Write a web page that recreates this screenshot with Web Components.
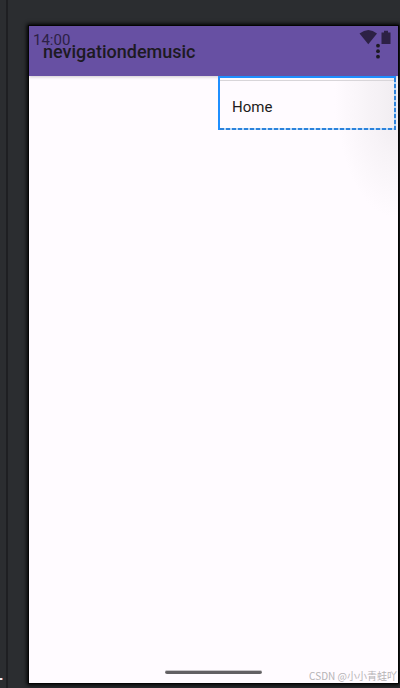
<!DOCTYPE html>
<html lang="en">
<head>
<meta charset="utf-8">
<meta name="viewport" content="width=device-width, initial-scale=1">
<title>nevigationdemusic</title>
<style>
html, body { margin: 0; height: 100%; }
body { font-family: Roboto, "Noto Sans CJK SC", sans-serif; background: #2b2d30; }
</style>
</head>
<body>
<design-surface>
  <phone-screen>
    <status-bar slot="status" time="14:00"></status-bar>
    <app-bar slot="bar">nevigationdemusic</app-bar>
    <overflow-menu><menu-entry>Home</menu-entry></overflow-menu>
    <nav-handle slot="foot"></nav-handle>
  </phone-screen>
  <water-mark slot="mark">CSDN @小小青蛙吖</water-mark>
</design-surface>
<script>
const define = (name, html, setup) => customElements.define(name, class extends HTMLElement {
  constructor() {
    super();
    const t = document.createElement('template');
    t.innerHTML = html;
    this.attachShadow({ mode: 'open' }).append(t.content.cloneNode(true));
    if (setup) setup(this);
  }
});

define('design-surface', `
<style>
:host { display: flex; position: relative; min-height: 100vh; box-sizing: border-box; background: #2b2d30; overflow: hidden; }
.rail { width: 6px; border-right: 2px solid #1e1f22; flex: none; display: flex; align-items: flex-end; }
.tick { width: 3px; height: 2px; margin-bottom: 8px; background: linear-gradient(90deg, #e8e8e8 0 2px, #b8695c 2px); }
.stage { flex: 1; display: flex; padding: 26px 2px 5px 21px; }
::slotted(phone-screen) { flex: 1; }
</style>
<div class="rail"><div class="tick"></div></div>
<div class="stage"><slot></slot></div>
<slot name="mark"></slot>`);

define('phone-screen', `
<style>
:host { display: flex; flex-direction: column; position: relative; background: #fffbff; box-shadow: 0 0 0 1px #050505, 0 0 4px 2px #000; }
main { flex: 1; display: flex; justify-content: flex-end; align-items: flex-start; padding-right: 2px;
  background: radial-gradient(ellipse 60px 110px at 100% 32px, #efebef, #f7f3f7 45%, #fffbff); }
</style>
<slot name="status"></slot><slot name="bar"></slot><main><slot></slot></main><slot name="foot"></slot>`);

define('status-bar', `
<style>
:host { display: flex; position: absolute; inset: 0 0 auto 0; z-index: 3; align-items: flex-start; justify-content: space-between; box-sizing: border-box; padding: 4px 7px 0 4px; color: #2d2145; font-size: 15px; line-height: 21px; }
svg { display: block; }
</style>
<time></time>
<svg width="32" height="16" viewBox="0 0 32 16" fill="currentColor" aria-hidden="true">
<path d="M.5 3.500Q9.500-3.500 18 3.500L9.300 14.200Z"/>
<path d="M22.500 2.500H25V.700h4v1.800h2.500V14h-9Z"/>
</svg>`, el => {
  el.shadowRoot.querySelector('time').textContent = el.getAttribute('time');
});

define('app-bar', `
<style>
:host { display: flex; position: relative; z-index: 1; height: 50px; align-items: center; justify-content: space-between; box-sizing: border-box; padding: 2px 12px 0 14px; background: #6750a3; color: #1d1a22; box-shadow: 0 1px 3px #0003; }
h1 { margin: 0; font-size: 18px; line-height: 24px; font-weight: 500; }
button { border: 0; padding: 0; background: none; color: inherit; display: block; }
svg { display: block; }
</style>
<h1><slot></slot></h1>
<button type="button" aria-label="More options"><svg width="16" height="18" viewBox="0 0 16 18" fill="currentColor"><circle cx="8" cy="2.700" r="1.900"/><circle cx="8" cy="8.200" r="1.900"/><circle cx="8" cy="13.700" r="1.900"/></svg></button>`);

define('overflow-menu', `
<style>
:host { display: block; position: relative; z-index: 2; width: 48.5%; box-sizing: border-box; padding-top: 5px; border: 2px solid #1f8fff; border-width: 2px 0 0 2px;
  background:
    repeating-linear-gradient(90deg, #2c83dc 0 4px, #b4d7f8 4px 6px) 0 100% / 100% 2px no-repeat,
    repeating-linear-gradient(180deg, #2c83dc 0 4px, #b4d7f8 4px 6px) 100% 0 / 2px 100% no-repeat,
    linear-gradient(90deg, #fffbff 65%, #f1edf1);
  background-clip: padding-box; }
:host::before { content: ""; position: absolute; inset: 2px 2px auto 0; border-top: 1px solid #d8d5d9; }
</style>
<slot></slot>`);

define('menu-entry', `
<style>
:host { display: block; }
button { display: block; width: 100%; border: 0; padding: 14px 12px 13px; background: none; color: #1d1b20; text-align: left; font: 15px/20px Roboto, sans-serif; }
</style>
<button type="button"><slot></slot></button>`);

define('nav-handle', `
<style>
:host { display: flex; justify-content: center; padding-bottom: 9px; }
div { width: 26.5%; height: 3px; border-radius: 2px; background: #626063; border-top: 1px solid #c8c5c8; }
</style>
<div></div>`);

define('water-mark', `
<style>
:host { display: block; position: absolute; right: 3px; bottom: 5px; font: 10px/14px "Noto Sans CJK SC", sans-serif; color: #b6b3b6; white-space: nowrap; }
</style>
<slot></slot>`);
</script>
</body>
</html>
